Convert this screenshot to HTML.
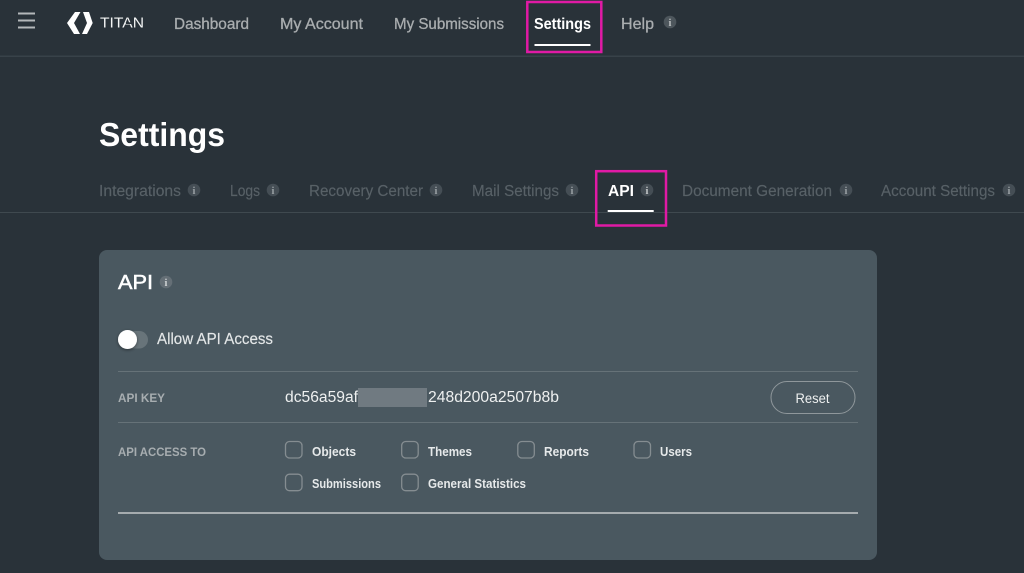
<!DOCTYPE html>
<html><head><meta charset="utf-8"><style>
html,body{margin:0;padding:0;background:#293239;width:1024px;height:573px;overflow:hidden}
svg{display:block}
text{font-family:"Liberation Sans",sans-serif}
.i{font-family:"Liberation Serif",serif;font-weight:700;font-size:10.5px;text-anchor:middle}
</style></head><body>
<svg width="1024" height="573" viewBox="0 0 1024 573" xmlns="http://www.w3.org/2000/svg">
<defs>
<filter id="sh" x="-50%" y="-50%" width="200%" height="200%"><feDropShadow dx="0" dy="1" stdDeviation="1.5" flood-color="#000" flood-opacity=".45"/></filter>
</defs>
<rect width="1024" height="573" fill="#293239"/>
<!-- header -->
<rect x="0" y="55.500" width="1024" height="1.500" fill="#384249"/>
<g fill="#b4b8ba"><rect x="18" y="12.500" width="17" height="2"/><rect x="18" y="19.500" width="17" height="2"/><rect x="18" y="26.500" width="17" height="2"/></g>
<!-- logo -->
<g fill="#fff">
<path d="M75 12 L80.500 12 L74 23 L80 34 L74 34 L67 23 Z"/>
<path d="M83 12 L89 12 L92.700 23 L87 34 L82 34 L87 23 Z"/>
</g>
<text x="100" y="27.500" font-size="15" fill="#f2f4f4" textLength="44" lengthAdjust="spacingAndGlyphs">TITAN</text>
<rect x="126" y="22.300" width="6" height="1.700" fill="#293239"/>
<g font-size="16" fill="#a9adaf" stroke="#a9adaf" stroke-width=".3">
<text x="174" y="29" textLength="75" lengthAdjust="spacingAndGlyphs">Dashboard</text>
<text x="280" y="29" textLength="83" lengthAdjust="spacingAndGlyphs">My Account</text>
<text x="394" y="29" textLength="110" lengthAdjust="spacingAndGlyphs">My Submissions</text>
<text x="621" y="29" textLength="33" lengthAdjust="spacingAndGlyphs">Help</text>
</g>
<text x="534" y="29" font-size="16" font-weight="700" fill="#fff" textLength="57" lengthAdjust="spacingAndGlyphs">Settings</text>
<rect x="534.500" y="44" width="56" height="2" fill="#fff"/>
<rect x="527.300" y="2" width="74" height="50" fill="none" stroke="#e01aa5" stroke-width="2.500"/>
<!-- help info -->
<circle cx="670" cy="22" r="6.300" fill="#4d565c"/><text class="i" x="670" y="26" fill="#b9bdbf">i</text>
<!-- title -->
<text x="99" y="146" font-size="33" font-weight="700" fill="#fff" textLength="126" lengthAdjust="spacingAndGlyphs">Settings</text>
<!-- tabs -->
<rect x="0" y="212" width="1024" height="1" fill="#3f494f"/>
<g font-size="15.500" fill="#586167" stroke="#586167" stroke-width=".15">
<text x="99" y="196" textLength="82" lengthAdjust="spacingAndGlyphs">Integrations</text>
<text x="230" y="196" textLength="30" lengthAdjust="spacingAndGlyphs">Logs</text>
<text x="309" y="196" textLength="114" lengthAdjust="spacingAndGlyphs">Recovery Center</text>
<text x="472" y="196" textLength="87" lengthAdjust="spacingAndGlyphs">Mail Settings</text>
<text x="682" y="196" textLength="150" lengthAdjust="spacingAndGlyphs">Document Generation</text>
<text x="881" y="196" textLength="114" lengthAdjust="spacingAndGlyphs">Account Settings</text>
</g>
<g fill="#454e55">
<circle cx="194" cy="190" r="6.300"/><circle cx="273" cy="190" r="6.300"/><circle cx="436" cy="190" r="6.300"/><circle cx="572" cy="190" r="6.300"/><circle cx="647" cy="190" r="6.300"/><circle cx="846" cy="190" r="6.300"/><circle cx="1009" cy="190" r="6.300"/>
</g>
<g fill="#99a0a4">
<text class="i" x="194" y="194">i</text><text class="i" x="273" y="194">i</text><text class="i" x="436" y="194">i</text><text class="i" x="572" y="194">i</text><text class="i" x="647" y="194" fill="#c3c7c9">i</text><text class="i" x="846" y="194">i</text><text class="i" x="1009" y="194">i</text>
</g>
<text x="608" y="196" font-size="15.500" font-weight="700" fill="#fff" textLength="26" lengthAdjust="spacingAndGlyphs">API</text>
<rect x="607.700" y="210" width="46" height="2" fill="#fff"/>
<rect x="596.200" y="171.200" width="69.800" height="54.300" fill="none" stroke="#e01aa5" stroke-width="2.500"/>
<!-- card -->
<rect x="99" y="250" width="778" height="310" rx="8" fill="#4a5860"/>
<text x="118" y="289" font-size="20.500" fill="#fff" textLength="35" lengthAdjust="spacingAndGlyphs" stroke="#fff" stroke-width=".5">API</text>
<circle cx="166" cy="282" r="6.300" fill="#656f76"/><text class="i" x="166" y="286" fill="#cfd2d4">i</text>
<!-- toggle -->
<rect x="118" y="331" width="30" height="17.500" rx="8.750" fill="#68747a"/>
<circle cx="127.500" cy="339.500" r="9.500" fill="#fff" filter="url(#sh)"/>
<text x="157" y="344" font-size="15.500" fill="#e4e7e8" stroke="#e4e7e8" stroke-width=".15" textLength="116" lengthAdjust="spacingAndGlyphs">Allow API Access</text>
<rect x="118" y="371" width="740" height="1" fill="#667278"/>
<rect x="118" y="422" width="740" height="1" fill="#667278"/>
<text x="118" y="402" font-size="11.500" font-weight="700" fill="#a7adb0" textLength="47" lengthAdjust="spacingAndGlyphs">API KEY</text>
<text x="285" y="402" font-size="15.500" fill="#eef0f0" textLength="73" lengthAdjust="spacingAndGlyphs">dc56a59af</text>
<rect x="358" y="388" width="69" height="19" fill="#707a81"/>
<text x="428" y="402" font-size="15.500" fill="#eef0f0" textLength="131" lengthAdjust="spacingAndGlyphs">248d200a2507b8b</text>
<rect x="771" y="381.500" width="84" height="32" rx="16" fill="none" stroke="#8f979b" stroke-width="1"/>
<text x="795.500" y="403" font-size="13.500" fill="#eef0f0" textLength="34" lengthAdjust="spacingAndGlyphs">Reset</text>
<text x="118" y="456" font-size="11.500" font-weight="700" fill="#a7adb0" textLength="88" lengthAdjust="spacingAndGlyphs">API ACCESS TO</text>
<g fill="none" stroke="#858d91" stroke-width="1.300">
<rect x="285.500" y="441.500" width="16.500" height="16.500" rx="4"/>
<rect x="401.700" y="441.500" width="16.500" height="16.500" rx="4"/>
<rect x="517.800" y="441.500" width="16.500" height="16.500" rx="4"/>
<rect x="634" y="441.500" width="16.500" height="16.500" rx="4"/>
<rect x="285.500" y="474.200" width="16.500" height="16.500" rx="4"/>
<rect x="401.700" y="474.200" width="16.500" height="16.500" rx="4"/>
</g>
<g font-size="13" font-weight="700" fill="#e6e9ea">
<text x="312" y="456" textLength="44" lengthAdjust="spacingAndGlyphs">Objects</text>
<text x="428" y="456" textLength="44" lengthAdjust="spacingAndGlyphs">Themes</text>
<text x="544" y="456" textLength="45" lengthAdjust="spacingAndGlyphs">Reports</text>
<text x="660" y="456" textLength="32" lengthAdjust="spacingAndGlyphs">Users</text>
<text x="312" y="488" textLength="69" lengthAdjust="spacingAndGlyphs">Submissions</text>
<text x="428" y="488" textLength="98" lengthAdjust="spacingAndGlyphs">General Statistics</text>
</g>
<rect x="118" y="512" width="740" height="2" fill="#a5abae"/>
</svg>
</body></html>
